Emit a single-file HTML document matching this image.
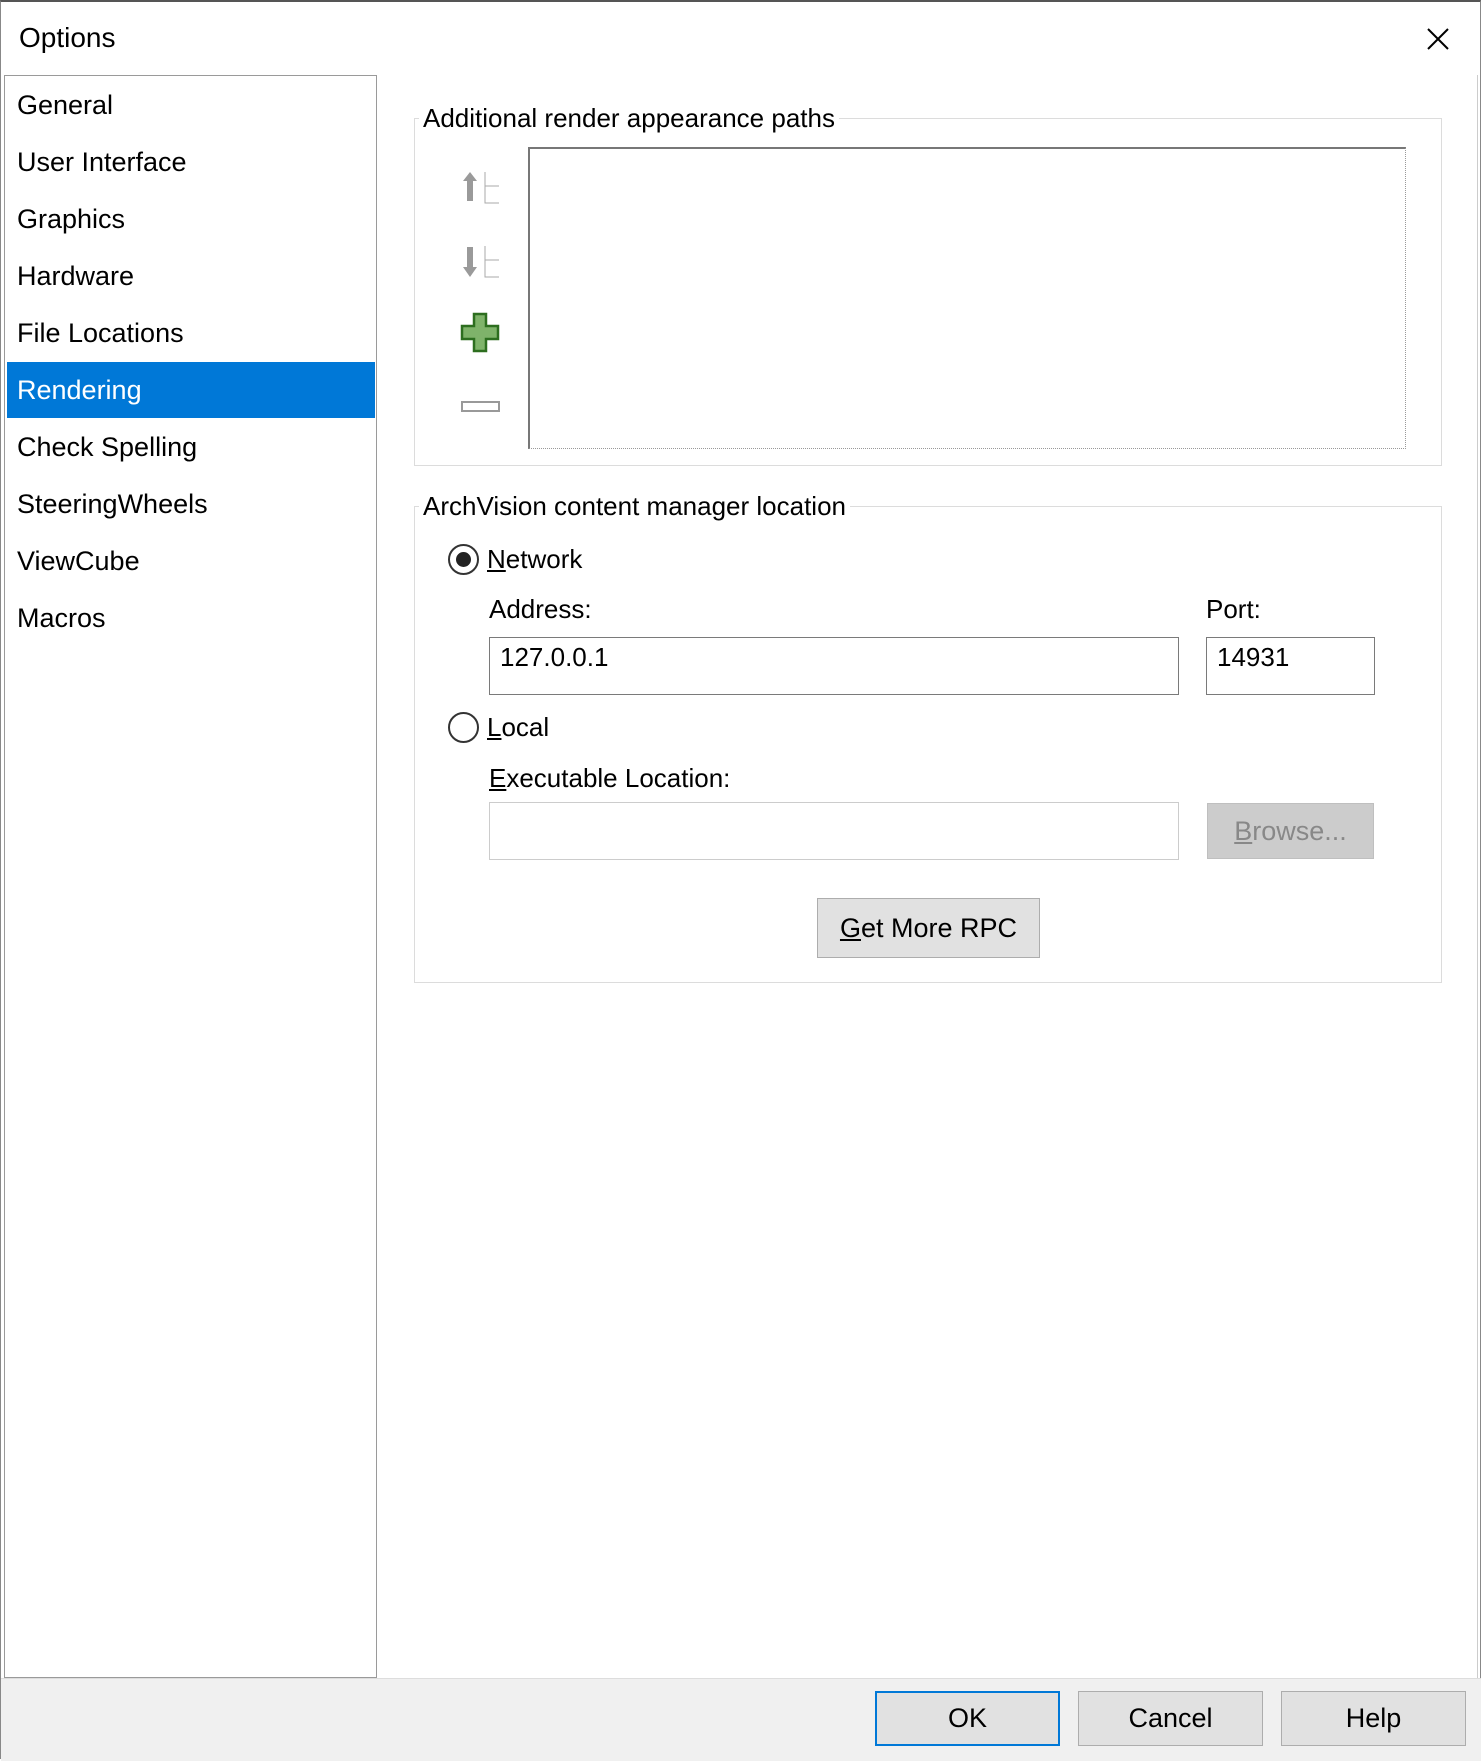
<!DOCTYPE html>
<html><head><style>
*{margin:0;padding:0;box-sizing:border-box}
body{width:1481px;height:1759px;background:#fff;font-family:"Liberation Sans",sans-serif;color:#000;position:relative;overflow:hidden;border:1px solid #888;border-top:2px solid #555}
.a{position:absolute}
.nav{font-size:27px;left:16px}
.t{font-size:26px}
.grp{border:1px solid #dcdcdc}
.leg{background:#fff;padding:0 4px;font-size:26px}
.btn{background:#e1e1e1;border:1px solid #adadad;font-size:27px;display:flex;align-items:center;justify-content:center}
.inp{border:1px solid #7a7a7a;background:#fff;font-size:26px;padding:4px 10px}
</style></head><body>
<div class="a" style="left:18px;top:20px;font-size:28px">Options</div>
<svg class="a" style="left:1426px;top:26px" width="22" height="22"><path d="M1 1L21 21M21 1L1 21" stroke="#000" stroke-width="2"/></svg>
<div class="a" style="left:3px;top:73px;width:373px;height:1603px;border:1px solid #9a9a9a"></div>
<div class="a" style="left:6px;top:360px;width:368px;height:56px;background:#0078d7"></div>
<div class="a nav" style="top:88px">General</div>
<div class="a nav" style="top:145px">User Interface</div>
<div class="a nav" style="top:202px">Graphics</div>
<div class="a nav" style="top:259px">Hardware</div>
<div class="a nav" style="top:316px">File Locations</div>
<div class="a nav" style="top:373px;color:#fff">Rendering</div>
<div class="a nav" style="top:430px">Check Spelling</div>
<div class="a nav" style="top:487px">SteeringWheels</div>
<div class="a nav" style="top:544px">ViewCube</div>
<div class="a nav" style="top:601px">Macros</div>
<div class="a" style="left:1476px;top:73px;width:1px;height:1603px;background:#ccc"></div>
<div class="a" style="left:0;top:1676px;width:1481px;height:83px;background:#f0f0f0;border-top:1px solid #ddd"></div>
<div class="a btn" style="left:874px;top:1689px;width:185px;height:55px;border:2px solid #0078d7">OK</div>
<div class="a btn" style="left:1077px;top:1689px;width:185px;height:55px">Cancel</div>
<div class="a btn" style="left:1280px;top:1689px;width:185px;height:55px">Help</div>

<div class="a grp" style="left:413px;top:116px;width:1028px;height:348px"></div>
<div class="a leg" style="left:418px;top:101px">Additional render appearance paths</div>
<div class="a" style="left:527px;top:145px;width:878px;height:302px;border:1px dotted #999;border-top:2px solid #777;border-left:2px solid #777"></div>
<svg class="a" style="left:458px;top:165px" width="46" height="300">
<g fill="#9a9a9a"><path d="M11 5l7 9h-4v20h-6v-20h-4z"/><path d="M8 80h6v20h4l-7 10-7-10h4z"/></g>
<g stroke="#aaa" stroke-width="1" fill="none"><path d="M26 5v31h14M26 19h14"/><path d="M26 79v31h14M26 93h14"/></g>
<path d="M15 147h12v12h12v13h-12v12h-12v-12h-12v-13h12z" fill="#7fb36a" stroke="#2d6e1f" stroke-width="2.5"/>
<rect x="3" y="235" width="37" height="9" fill="#fff" stroke="#999" stroke-width="2"/>
</svg>

<div class="a grp" style="left:413px;top:504px;width:1028px;height:477px"></div>
<div class="a leg" style="left:418px;top:489px">ArchVision content manager location</div>
<div class="a" style="left:447px;top:542px;width:31px;height:31px;border:2px solid #333;border-radius:50%"></div>
<div class="a" style="left:455px;top:550px;width:15px;height:15px;background:#222;border-radius:50%"></div>
<div class="a t" style="left:486px;top:542px"><u>N</u>etwork</div>
<div class="a t" style="left:488px;top:592px">Address:</div>
<div class="a t" style="left:1205px;top:592px">Port:</div>
<div class="a inp" style="left:488px;top:635px;width:690px;height:58px">127.0.0.1</div>
<div class="a inp" style="left:1205px;top:635px;width:169px;height:58px">14931</div>
<div class="a" style="left:447px;top:710px;width:31px;height:31px;border:2px solid #333;border-radius:50%"></div>
<div class="a t" style="left:486px;top:710px"><u>L</u>ocal</div>
<div class="a t" style="left:488px;top:761px"><u>E</u>xecutable Location:</div>
<div class="a" style="left:488px;top:800px;width:690px;height:58px;border:1px solid #ccc"></div>
<div class="a btn" style="left:1206px;top:801px;width:167px;height:56px;background:#ccc;border-color:#bfbfbf;color:#888"><span><u>B</u>rowse...</span></div>
<div class="a btn" style="left:816px;top:896px;width:223px;height:60px"><span><u>G</u>et More RPC</span></div>
</body></html>
